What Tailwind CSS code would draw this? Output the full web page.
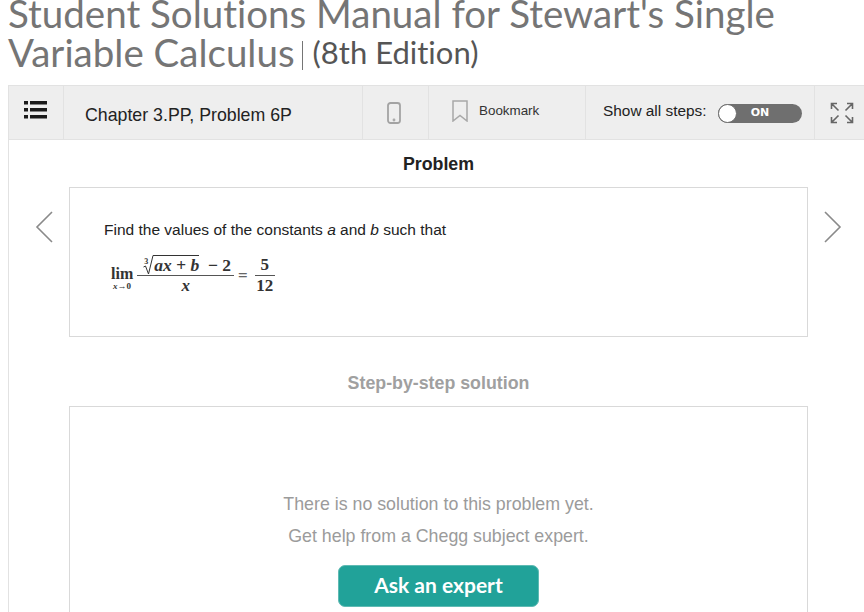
<!DOCTYPE html>
<html lang="en">

<head>
  <meta charset="UTF-8" />
  <title>Student Solutions Manual</title>
  <script src="https://cdn.jsdelivr.net/npm/@tailwindcss/browser@4"></script>
</head>

<body class="bg-white h-[612px] overflow-hidden font-['Liberation_Sans',sans-serif]">

  <!-- Title -->
  <h1 class="h-[85px] pl-2 -mt-[6px] text-[38.5px] leading-[39px] text-[#757575] font-['Lato',sans-serif] whitespace-nowrap [font-variant-ligatures:none]">
    <span class="block">Student Solutions Manual for Stewart's Single</span>
    <span class="flex items-center">Variable Calculus<span class="w-px h-[29px] bg-[#757575] ml-[7px] mr-[10px] mt-[5px]"></span><span class="text-[31px] text-[#555555]">(8th Edition)</span></span>
  </h1>

  <!-- Toolbar + body -->
  <div class="mt-[6px] ml-2 border-l border-[#e2e2e2]">
    <div class="flex h-[55px] bg-[#eeeeee] border-y border-[#e2e2e2]">
      <div class="w-[55px] border-r border-[#e2e2e2] flex justify-center pt-[15px]">
        <svg width="24" height="20" viewBox="0 0 24 20" fill="#1a1a1a">
          <rect x="0" y="0" width="4" height="3.5" />
          <rect x="6" y="0" width="17" height="3.5" />
          <rect x="0" y="7" width="4" height="3.5" />
          <rect x="6" y="7" width="17" height="3.5" />
          <rect x="0" y="14" width="4" height="3.5" />
          <rect x="6" y="14" width="17" height="3.5" />
        </svg>
      </div>
      <div class="w-[299px] border-r border-[#e2e2e2] pl-[21px] pt-[6px] flex items-center text-[17.75px] text-[#222222]">Chapter 3.PP, Problem 6P</div>
      <div class="w-[66px] border-r border-[#e2e2e2] flex items-center justify-center">
        <svg class="-ml-[3px]" width="14" height="22" viewBox="0 0 14 22" fill="none" stroke="#a3a3a3" stroke-width="1.8">
          <rect x="1" y="1" width="12" height="20" rx="2.5" />
          <circle cx="7" cy="18" r="0.5" />
        </svg>
      </div>
      <div class="w-[157px] border-r border-[#e2e2e2] flex items-center pl-[23px] gap-[11px] text-[13.4px] text-[#333333]">
        <svg class="-mt-[4px]" width="16" height="22" viewBox="0 0 16 22" fill="none" stroke="#a8a8a8" stroke-width="1.5">
          <path d="M1 1H15V21L8 15.5L1 21Z" />
        </svg>
        <span class="-mt-[3px]">Bookmark</span>
      </div>
      <div class="w-[229px] border-r border-[#e2e2e2] flex items-center pl-[17px] text-[15.4px] text-[#222222]">
        <span class="-mt-[3px]">Show all steps:</span>
        <div class="relative ml-[11px] mt-[2px] w-[84px] h-[19px] rounded-full bg-[#6f6f6f] flex items-center justify-center pl-[1px] text-[11px] font-['DejaVu_Sans',sans-serif] font-bold text-white">
          ON
          <span class="absolute left-0 top-0 w-[19px] h-[19px] rounded-full bg-white border border-[#6f6f6f]"></span>
        </div>
      </div>
      <div class="flex-1 flex items-center justify-center pl-[5px]">
        <svg width="24" height="22" viewBox="0 0 24 22" fill="none" stroke="#666666" stroke-width="1.6">
          <path d="M1.5 7V1.5H7M1.5 1.5L8.5 8.5M22.5 7V1.5H17M22.5 1.5L15.5 8.5M1.5 15V20.5H7M1.5 20.5L8.5 13.5M22.5 15V20.5H17M22.5 20.5L15.5 13.5" />
        </svg>
      </div>
    </div>

    <!-- Problem -->
    <div class="flex">
      <div class="w-[60px] pt-[71px] pl-[26px]">
        <svg width="18" height="32" viewBox="0 0 18 32" fill="none" stroke="#8a8a8a" stroke-width="1.6"><path d="M17 1L2 16L17 31" /></svg>
      </div>
      <div class="w-[739px]">
        <h2 class="h-[47px] pt-[13px] text-center text-[17.8px] leading-[22px] font-bold text-[#222222]">Problem</h2>
        <div class="h-[150px] border border-[#d9d9d9] pl-[34px] pt-[32px]">
          <p class="text-[15.5px] leading-[20px] text-[#222222]">Find the values of the constants <i>a</i> and <i>b</i> such that</p>
          <div class="flex items-center mt-[15px] ml-[7px] font-['Liberation_Serif',serif] text-[#333333]">
            <div class="flex flex-col items-center pt-[7px]">
              <span class="text-[16px] leading-[14px] font-bold">lim</span>
              <span class="text-[9px] leading-[10px] font-bold"><i>x</i>→0</span>
            </div>
            <div class="ml-[4px] flex flex-col items-center">
              <span class="flex items-end text-[17.5px] leading-[20px] font-bold whitespace-nowrap pl-[7px] pr-[3px]">
                <span class="text-[8px] leading-[14px] self-start">3</span>
                <svg class="-ml-[5px] self-start" width="11" height="20" viewBox="0 0 11 20" fill="none" stroke="#333333" stroke-width="1"><path d="M0.5 12L2.5 11L5.5 19L10 0.5H11" /></svg>
                <i class="border-t border-[#333333] leading-[19px] whitespace-pre">ax + b</i><span class="whitespace-pre">  − 2</span>
              </span>
              <span class="h-px w-full bg-[#555555]"></span>
              <i class="text-[17px] leading-[20px] font-bold">x</i>
            </div>
            <span class="ml-[4px] mr-[7px] mt-[1px] text-[17px] font-bold text-[#666666]">=</span>
            <div class="flex flex-col items-center">
              <span class="text-[17px] leading-[20px] font-bold">5</span>
              <span class="h-px w-[20px] bg-[#555555]"></span>
              <span class="text-[17px] leading-[20px] font-bold">12</span>
            </div>
          </div>
        </div>

        <!-- Solution -->
        <h2 class="h-[69px] pt-[35px] text-center text-[17.8px] leading-[22px] font-bold text-[#a0a0a0]">Step-by-step solution</h2>
        <div class="h-[220px] border border-[#d9d9d9] flex flex-col items-center pt-[86px] text-[17.8px] text-[#9b9b9b]">
          <p class="leading-[22px]">There is no solution to this problem yet.</p>
          <p class="leading-[22px] mt-[10px]">Get help from a Chegg subject expert.</p>
          <button class="mt-[18px] w-[201px] h-[42px] rounded-[7px] bg-[#21a299] border border-[#5fbab3] pb-[3px] text-white text-[21px] font-bold font-['Lato',sans-serif]">Ask an expert</button>
        </div>
      </div>
      <div class="pt-[71px] pl-[16px]">
        <svg width="18" height="32" viewBox="0 0 18 32" fill="none" stroke="#8a8a8a" stroke-width="1.6"><path d="M1 1L16 16L1 31" /></svg>
      </div>
    </div>
  </div>

</body>

</html>
